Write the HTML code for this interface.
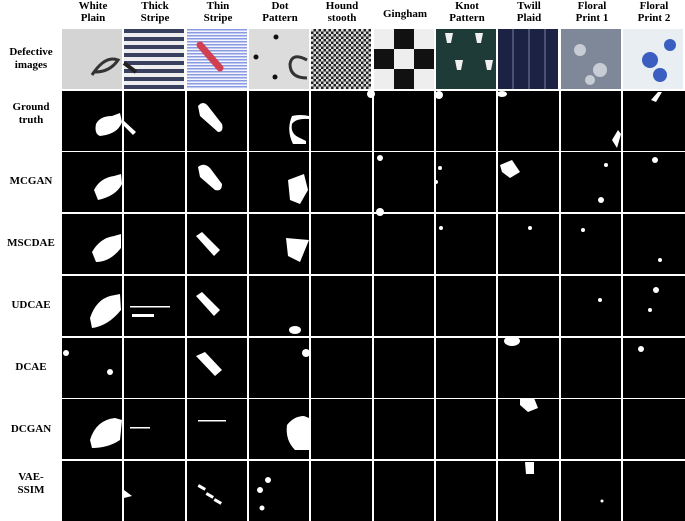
<!DOCTYPE html>
<html><head><style>
body{margin:0;width:685px;height:521px;background:#fff;position:relative;overflow:hidden;font-family:"Liberation Serif",serif;font-weight:bold;font-size:11px;color:#000}
.h{position:absolute;top:0;width:62px;text-align:center;line-height:12px}
.l{position:absolute;left:0;width:62px;text-align:center;line-height:13px}
.t{position:absolute;width:60px;height:60px;background:#000}
</style></head><body>
<div class="h" style="left:62px">White<br>Plain</div>
<div class="h" style="left:124px">Thick<br>Stripe</div>
<div class="h" style="left:187px">Thin<br>Stripe</div>
<div class="h" style="left:249px">Dot<br>Pattern</div>
<div class="h" style="left:311px">Hound<br>stooth</div>
<div class="h" style="left:374px;top:8px">Gingham</div>
<div class="h" style="left:436px">Knot<br>Pattern</div>
<div class="h" style="left:498px">Twill<br>Plaid</div>
<div class="h" style="left:561px">Floral<br>Print 1</div>
<div class="h" style="left:623px">Floral<br>Print 2</div>

<div class="l" style="top:46px">Defective<br>images</div>
<div class="l" style="top:101px">Ground<br>truth</div>
<div class="l" style="top:175px">MCGAN</div>
<div class="l" style="top:237px">MSCDAE</div>
<div class="l" style="top:299px">UDCAE</div>
<div class="l" style="top:361px">DCAE</div>
<div class="l" style="top:423px">DCGAN</div>
<div class="l" style="top:471px">VAE-<br>SSIM</div>

<!-- image row -->
<div class="t" style="left:62px;top:29px;background:#d4d4d4"></div>
<div class="t" style="left:124px;top:29px;background:repeating-linear-gradient(#3a4060 0 4px,#eee 4px 8px)"></div>
<div class="t" style="left:187px;top:29px;background:repeating-linear-gradient(#8a9be0 0 1.5px,#f4f4ff 1.5px 3px)"></div>
<div class="t" style="left:249px;top:29px;background:#dcdcdc"></div>
<div class="t" style="left:311px;top:29px;background:repeating-conic-gradient(#222 0 25%,#ddd 0 50%) 0 0/5px 5px"></div>
<div class="t" style="left:374px;top:29px;background:repeating-conic-gradient(#111 0 25%,#eee 0 50%) 0 0/40px 40px;background-color:#888"></div>
<div class="t" style="left:436px;top:29px;background:#1e3b38"></div>
<div class="t" style="left:498px;top:29px;background:repeating-linear-gradient(90deg,#1c2244 0 14px,#4a5070 14px 16px),#1c2244"></div>
<div class="t" style="left:561px;top:29px;background:#7f8898"></div>
<div class="t" style="left:623px;top:29px;background:#e8eef2"></div>

<svg width="685" height="521" style="position:absolute;left:0;top:0">
<g fill="#000">
</g>
<g id="tiles"></g>
<!-- ink marks on image row -->
<path d="M92 75 Q105 55 118 60 Q110 72 95 72" stroke="#333" stroke-width="3" fill="none"/>
<path d="M124 63 L136 72" stroke="#222" stroke-width="4"/>
<path d="M200 45 L220 68" stroke="#d04050" stroke-width="7" stroke-linecap="round"/>
<circle cx="276" cy="37" r="2.5" fill="#111"/><circle cx="256" cy="57" r="2.5" fill="#111"/><circle cx="275" cy="77" r="2.5" fill="#111"/>
<path d="M307 60 Q292 52 290 64 Q290 78 307 78" stroke="#333" stroke-width="3" fill="none"/>
<g fill="#f0f0f0"><path d="M445 33 l8 0 l-2 10 l-4 0z M475 33 l8 0 l-2 10 l-4 0z M455 60 l8 0 l-2 10 l-4 0z M485 60 l8 0 l-2 10 l-4 0z"/></g>
<g fill="#3a5fc0"><circle cx="650" cy="60" r="8"/><circle cx="670" cy="45" r="6"/><circle cx="660" cy="75" r="7"/></g>
<g fill="#c8ccd4"><circle cx="580" cy="50" r="6"/><circle cx="600" cy="70" r="7"/><circle cx="590" cy="80" r="5"/></g>
</svg>

<div id="m"></div>
<style>
.k{position:absolute;background:#000;width:60px;height:60px}
</style>
<svg width="685" height="521" style="position:absolute;left:0;top:0">
<g fill="#000">
<rect x="62" y="91" width="60" height="60"/><rect x="124" y="91" width="61" height="60"/><rect x="187" y="91" width="60" height="60"/><rect x="249" y="91" width="60" height="60"/><rect x="311" y="91" width="61" height="60"/><rect x="374" y="91" width="60" height="60"/><rect x="436" y="91" width="60" height="60"/><rect x="498" y="91" width="61" height="60"/><rect x="561" y="91" width="60" height="60"/><rect x="623" y="91" width="62" height="60"/>
<rect x="62" y="152" width="60" height="60"/><rect x="124" y="152" width="61" height="60"/><rect x="187" y="152" width="60" height="60"/><rect x="249" y="152" width="60" height="60"/><rect x="311" y="152" width="61" height="60"/><rect x="374" y="152" width="60" height="60"/><rect x="436" y="152" width="60" height="60"/><rect x="498" y="152" width="61" height="60"/><rect x="561" y="152" width="60" height="60"/><rect x="623" y="152" width="62" height="60"/>
<rect x="62" y="214" width="60" height="60"/><rect x="124" y="214" width="61" height="60"/><rect x="187" y="214" width="60" height="60"/><rect x="249" y="214" width="60" height="60"/><rect x="311" y="214" width="61" height="60"/><rect x="374" y="214" width="60" height="60"/><rect x="436" y="214" width="60" height="60"/><rect x="498" y="214" width="61" height="60"/><rect x="561" y="214" width="60" height="60"/><rect x="623" y="214" width="62" height="60"/>
<rect x="62" y="276" width="60" height="60"/><rect x="124" y="276" width="61" height="60"/><rect x="187" y="276" width="60" height="60"/><rect x="249" y="276" width="60" height="60"/><rect x="311" y="276" width="61" height="60"/><rect x="374" y="276" width="60" height="60"/><rect x="436" y="276" width="60" height="60"/><rect x="498" y="276" width="61" height="60"/><rect x="561" y="276" width="60" height="60"/><rect x="623" y="276" width="62" height="60"/>
<rect x="62" y="338" width="60" height="60"/><rect x="124" y="338" width="61" height="60"/><rect x="187" y="338" width="60" height="60"/><rect x="249" y="338" width="60" height="60"/><rect x="311" y="338" width="61" height="60"/><rect x="374" y="338" width="60" height="60"/><rect x="436" y="338" width="60" height="60"/><rect x="498" y="338" width="61" height="60"/><rect x="561" y="338" width="60" height="60"/><rect x="623" y="338" width="62" height="60"/>
<rect x="62" y="399" width="60" height="60"/><rect x="124" y="399" width="61" height="60"/><rect x="187" y="399" width="60" height="60"/><rect x="249" y="399" width="60" height="60"/><rect x="311" y="399" width="61" height="60"/><rect x="374" y="399" width="60" height="60"/><rect x="436" y="399" width="60" height="60"/><rect x="498" y="399" width="61" height="60"/><rect x="561" y="399" width="60" height="60"/><rect x="623" y="399" width="62" height="60"/>
<rect x="62" y="461" width="60" height="60"/><rect x="124" y="461" width="61" height="60"/><rect x="187" y="461" width="60" height="60"/><rect x="249" y="461" width="60" height="60"/><rect x="311" y="461" width="61" height="60"/><rect x="374" y="461" width="60" height="60"/><rect x="436" y="461" width="60" height="60"/><rect x="498" y="461" width="61" height="60"/><rect x="561" y="461" width="60" height="60"/><rect x="623" y="461" width="62" height="60"/>
</g>
<g fill="#fff" stroke="none">
<!-- GT -->
<path d="M96 124 Q100 116 112 116 L120 113 L122 122 Q118 134 100 136 Q94 134 96 124z"/>
<path d="M124 121 L136 132 L133 135 L124 126z"/>
<path d="M198 106 Q203 100 208 106 L222 124 Q224 132 218 132 L200 116z"/>
<path d="M292 116 Q300 114 309 116 L309 119 Q296 118 292 124 Q290 134 300 138 L306 141 L306 144 L293 144 Q286 130 292 116z"/>
<circle cx="371" cy="94" r="4"/><circle cx="439" cy="95" r="4"/><ellipse cx="502" cy="94" rx="5" ry="3"/><path d="M612 140 L618 130 L621 134 L617 148z"/><path d="M651 100 L658 92 L662 92 L656 102z"/>
<!-- MCGAN -->
<path d="M94 190 Q100 178 114 176 L121 174 L122 184 Q116 196 98 200z"/>
<path d="M198 167 Q204 162 210 168 L222 184 Q222 192 215 190 L200 177z"/>
<path d="M288 180 L304 174 L308 190 L300 204 L290 200z"/>
<path d="M500 165 L512 160 L520 172 L510 178 L502 172z"/>
<circle cx="380" cy="158" r="3"/><circle cx="440" cy="168" r="2"/><circle cx="436" cy="182" r="2"/><circle cx="601" cy="200" r="3"/><circle cx="655" cy="160" r="3"/><circle cx="606" cy="165" r="2"/>
<!-- MSCDAE -->
<path d="M92 252 Q100 238 114 236 L121 234 L121 248 Q110 262 96 262z"/>
<path d="M196 236 L202 232 L220 250 L214 256z"/>
<path d="M286 238 L309 240 L300 262 L288 256z"/>
<circle cx="380" cy="212" r="4"/><circle cx="530" cy="228" r="2"/><circle cx="441" cy="228" r="2"/><circle cx="660" cy="260" r="2"/><circle cx="583" cy="230" r="2"/>
<!-- UDCAE -->
<path d="M90 318 Q96 300 110 296 L120 294 L121 310 Q108 326 92 328z"/>
<path d="M196 296 L202 292 L220 310 L214 316z"/>
<rect x="130" y="306" width="40" height="1.5"/><rect x="132" y="314" width="22" height="3"/>
<ellipse cx="295" cy="330" rx="6" ry="4"/><circle cx="656" cy="290" r="3"/><circle cx="650" cy="310" r="2"/><circle cx="600" cy="300" r="2"/>
<!-- DCAE -->
<ellipse cx="512" cy="341" rx="8" ry="5"/><circle cx="66" cy="353" r="3"/><circle cx="110" cy="372" r="3"/><path d="M196 356 L205 352 L222 370 L215 376z"/><circle cx="306" cy="353" r="4"/><circle cx="641" cy="349" r="3"/>
<!-- DCGAN -->
<path d="M90 440 Q96 420 115 418 L122 420 L120 440 Q108 448 92 448z"/>
<path d="M287 425 Q294 416 304 416 L309 418 L309 450 L295 450 Q285 440 287 425z"/>
<path d="M520 399 L534 398 L538 408 L528 412 L520 405z"/>
<rect x="130" y="427" width="20" height="1.5"/><rect x="198" y="420" width="28" height="1.5"/>
<!-- VAE-SSIM -->
<path d="M525 462 L534 462 L534 474 L526 474z"/><path d="M124 490 L132 496 L124 498z"/>
<circle cx="260" cy="490" r="3"/><circle cx="268" cy="480" r="3"/><circle cx="262" cy="508" r="2.5"/>
<rect x="198" y="486" width="8" height="3" transform="rotate(30 202 487)"/><rect x="206" y="494" width="8" height="3" transform="rotate(30 210 495)"/><rect x="214" y="500" width="8" height="3" transform="rotate(30 218 501)"/>
<circle cx="602" cy="501" r="1.5"/>
</g>
</svg>
</body></html>
